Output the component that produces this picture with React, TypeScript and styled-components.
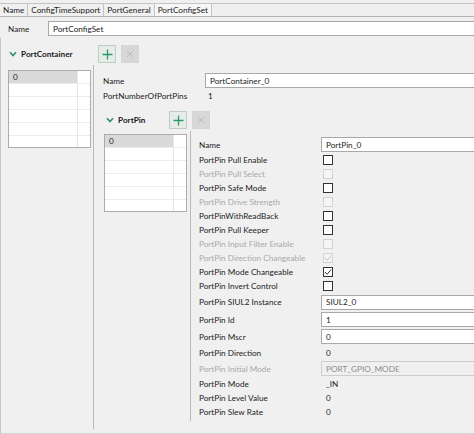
import styled, { createGlobalStyle } from 'styled-components';

const GlobalStyle = createGlobalStyle`
    html, body {
        margin: 0;
        padding: 0;
        background: #f0f0f0;
    }
    body {
        font-family: Lato, 'Liberation Sans', sans-serif;
        font-size: 8.2px;
        color: #1c1c1c;
    }
`;

const Page = styled.div`
    width: 474px;
    height: 434px;
    display: flex;
    flex-direction: column;
    overflow: hidden;
    background: #f0f0f0;
`;

const TabBar = styled.div`
    margin-top: 3px;
    height: 12px;
    display: flex;
    border-top: 1px solid #c4c4c4;
    border-bottom: 1px solid #b4b4b4;
    background: #efefef;
`;

const Tab = styled.div<{ $active?: boolean }>`
    display: flex;
    align-items: center;
    padding: 0 3px;
    border-right: 1px solid #c4c4c4;
    background: ${(p) => (p.$active ? '#f7f7f7' : '#f0f0f0')};
    white-space: nowrap;
`;

const TopRow = styled.div`
    margin-top: 4px;
    display: flex;
    align-items: center;
    height: 15px;
`;

const TopLabel = styled.span`
    width: 40px;
    padding-left: 8px;
`;

const TextBox = styled.div<{ $disabled?: boolean }>`
    flex: 1;
    height: 15px;
    box-sizing: border-box;
    display: flex;
    align-items: center;
    padding-left: 4px;
    border: 1px solid ${(p) => (p.$disabled ? '#cdcdcd' : '#a9a9a9')};
    border-right: none;
    background: ${(p) => (p.$disabled ? '#f0f0f0' : '#ffffff')};
    color: ${(p) => (p.$disabled ? '#8c8c8c' : '#1c1c1c')};
    white-space: nowrap;
`;

const Content = styled.div`
    flex: 1;
    margin-top: 2px;
    display: flex;
    flex-direction: column;
    border-left: 1px solid #c8c8c8;
    border-bottom: 1px solid #d4d4d4;
    padding: 6px 0 4px;
    min-height: 0;
`;

const SectionHeader = styled.div<{ $indent: number; $buttonsAt: number; $top?: number }>`
    height: 20px;
    display: flex;
    align-items: center;
    padding-left: ${(p) => p.$indent}px;
    margin-top: ${(p) => p.$top ?? 0}px;
    margin-bottom: 1px;
    flex-shrink: 0;

    .title {
        display: flex;
        align-items: center;
        gap: 4px;
        width: ${(p) => p.$buttonsAt}px;
        font-weight: 700;
    }
`;

const ToolButton = styled.div<{ $kind: 'add' | 'remove' }>`
    width: 18px;
    height: 18px;
    box-sizing: border-box;
    margin-right: 5px;
    display: flex;
    align-items: center;
    justify-content: center;
    border: 1px solid ${(p) => (p.$kind === 'add' ? '#b9cfc5' : '#d6d6d6')};
    background: ${(p) => (p.$kind === 'add' ? '#e7ece9' : '#d7d7d7')};
`;

const Split = styled.div`
    flex: 1;
    display: flex;
    min-height: 0;
`;

const Divider = styled.div`
    width: 1px;
    background: #b9b9b9;
    flex-shrink: 0;
`;

const ListBox = styled.div<{ $left: number; $gap: number; $top: number }>`
    width: 83px;
    height: 78px;
    box-sizing: border-box;
    margin: ${(p) => p.$top}px ${(p) => p.$gap}px 0 ${(p) => p.$left}px;
    border: 1px solid #acacac;
    background: #ffffff;
    overflow: hidden;
    flex-shrink: 0;
`;

const ListRow = styled.div<{ $selected?: boolean }>`
    height: 13px;
    box-sizing: border-box;
    display: grid;
    grid-template-columns: 69px 1fr;
    border-bottom: 1px solid #ececec;

    .cell {
        display: flex;
        align-items: center;
        padding-left: 4px;
        background: ${(p) => (p.$selected ? '#d9d9d9' : 'transparent')};
        border-right: 1px solid #e6e6e6;
    }
`;

const DetailPane = styled.div`
    flex: 1;
    display: flex;
    flex-direction: column;
    padding: 7px 0 8px 9px;
    min-width: 0;
`;

const FieldsPane = styled.div`
    flex: 1;
    padding: 5px 0 0 8px;
    min-width: 0;
`;

const FieldRow = styled.div<{ $height: number; $labelWidth: number; $disabled?: boolean }>`
    height: ${(p) => p.$height}px;
    display: flex;
    align-items: center;

    .label {
        width: ${(p) => p.$labelWidth}px;
        flex-shrink: 0;
        white-space: nowrap;
        color: ${(p) => (p.$disabled ? '#a9a9a9' : '#1c1c1c')};
    }

    .value {
        padding-left: 5px;
    }
`;

const CheckBox = styled.span<{ $disabled?: boolean }>`
    width: 10px;
    height: 10px;
    box-sizing: border-box;
    margin-left: 2px;
    display: flex;
    align-items: center;
    justify-content: center;
    border: 1px solid ${(p) => (p.$disabled ? '#d3d3d3' : '#333333')};
    background: ${(p) => (p.$disabled ? '#f4f4f4' : '#ffffff')};
`;

const Chevron = () => (
    <svg width="8" height="6" viewBox="0 0 8 6" fill="none">
        <path d="M1 1.3 L4 4.5 L7 1.3" stroke="#2f8f6e" strokeWidth="1.6" />
    </svg>
);

const PlusIcon = () => (
    <svg width="11" height="11" viewBox="0 0 11 11" fill="none">
        <path d="M5.5 0.5 V10.5 M0.5 5.5 H10.5" stroke="#2a9a6b" strokeWidth="1.3" />
    </svg>
);

const CrossIcon = () => (
    <svg width="8" height="8" viewBox="0 0 8 8" fill="none">
        <path d="M1 1 L7 7 M7 1 L1 7" stroke="#bdbdbd" strokeWidth="1" />
    </svg>
);

const CheckMark = ({ color }: { color: string }) => (
    <svg width="8" height="8" viewBox="0 0 8 8" fill="none">
        <path d="M1 4 L3.2 6.3 L7 1.6" stroke={color} strokeWidth="1" />
    </svg>
);

type Field = {
    label: string;
    kind: 'check' | 'input' | 'text';
    value?: string;
    checked?: boolean;
    disabled?: boolean;
    height: number;
};

const pinFields: Field[] = [
    { label: 'Name', kind: 'input', value: 'PortPin_0', height: 17 },
    { label: 'PortPin Pull Enable', kind: 'check', height: 14 },
    { label: 'PortPin Pull Select', kind: 'check', disabled: true, height: 14 },
    { label: 'PortPin Safe Mode', kind: 'check', height: 14 },
    { label: 'PortPin Drive Strength', kind: 'check', disabled: true, height: 14 },
    { label: 'PortPinWithReadBack', kind: 'check', height: 14 },
    { label: 'PortPin Pull Keeper', kind: 'check', height: 14 },
    { label: 'PortPin Input Filter Enable', kind: 'check', disabled: true, height: 14 },
    { label: 'PortPin Direction Changeable', kind: 'check', disabled: true, checked: true, height: 14 },
    { label: 'PortPin Mode Changeable', kind: 'check', checked: true, height: 14 },
    { label: 'PortPin Invert Control', kind: 'check', height: 14 },
    { label: 'PortPin SIUL2 Instance', kind: 'input', value: 'SIUL2_0', height: 18 },
    { label: 'PortPin Id', kind: 'input', value: '1', height: 17 },
    { label: 'PortPin Mscr', kind: 'input', value: '0', height: 17 },
    { label: 'PortPin Direction', kind: 'text', value: '0', height: 15 },
    { label: 'PortPin Initial Mode', kind: 'input', value: 'PORT_GPIO_MODE', disabled: true, height: 17 },
    { label: 'PortPin Mode', kind: 'text', value: '_IN', height: 14 },
    { label: 'PortPin Level Value', kind: 'text', value: '0', height: 14 },
    { label: 'PortPin Slew Rate', kind: 'text', value: '0', height: 13 },
];

const ItemList = ({ left, gap, top }: { left: number; gap: number; top: number }) => (
    <ListBox $left={left} $gap={gap} $top={top}>
        {[0, 1, 2, 3, 4, 5].map((i) => (
            <ListRow key={i} $selected={i === 0}>
                <div className="cell">{i === 0 ? '0' : ''}</div>
                <div />
            </ListRow>
        ))}
    </ListBox>
);

const renderValue = (f: Field) => {
    if (f.kind === 'check') {
        return (
            <CheckBox $disabled={f.disabled}>
                {f.checked && <CheckMark color={f.disabled ? '#c4c4c4' : '#333333'} />}
            </CheckBox>
        );
    }
    if (f.kind === 'input') {
        return <TextBox $disabled={f.disabled}>{f.value}</TextBox>;
    }
    return <span className="value">{f.value}</span>;
};

export default function App() {
    return (
        <Page>
            <GlobalStyle />
            <TabBar>
                <Tab>Name</Tab>
                <Tab>ConfigTimeSupport</Tab>
                <Tab>PortGeneral</Tab>
                <Tab $active>PortConfigSet</Tab>
            </TabBar>

            <TopRow>
                <TopLabel>Name</TopLabel>
                <TextBox>PortConfigSet</TextBox>
            </TopRow>

            <Content>
                <SectionHeader $indent={8} $buttonsAt={89}>
                    <span className="title">
                        <Chevron />
                        PortContainer
                    </span>
                    <ToolButton $kind="add">
                        <PlusIcon />
                    </ToolButton>
                    <ToolButton $kind="remove">
                        <CrossIcon />
                    </ToolButton>
                </SectionHeader>

                <Split>
                    <ItemList left={7} gap={2} top={5} />
                    <Divider />
                    <DetailPane>
                        <FieldRow $height={17} $labelWidth={102}>
                            <span className="label">Name</span>
                            <TextBox>PortContainer_0</TextBox>
                        </FieldRow>
                        <FieldRow $height={14} $labelWidth={100}>
                            <span className="label">PortNumberOfPortPins</span>
                            <span className="value">1</span>
                        </FieldRow>

                        <SectionHeader $indent={3} $buttonsAt={63} $top={7}>
                            <span className="title">
                                <Chevron />
                                PortPin
                            </span>
                            <ToolButton $kind="add">
                                <PlusIcon />
                            </ToolButton>
                            <ToolButton $kind="remove">
                                <CrossIcon />
                            </ToolButton>
                        </SectionHeader>

                        <Split>
                            <ItemList left={1} gap={3} top={3} />
                            <Divider />
                            <FieldsPane>
                                {pinFields.map((f) => (
                                    <FieldRow
                                        key={f.label}
                                        $height={f.height}
                                        $labelWidth={122}
                                        $disabled={f.disabled}
                                    >
                                        <span className="label">{f.label}</span>
                                        {renderValue(f)}
                                    </FieldRow>
                                ))}
                            </FieldsPane>
                        </Split>
                    </DetailPane>
                </Split>
            </Content>
        </Page>
    );
}
